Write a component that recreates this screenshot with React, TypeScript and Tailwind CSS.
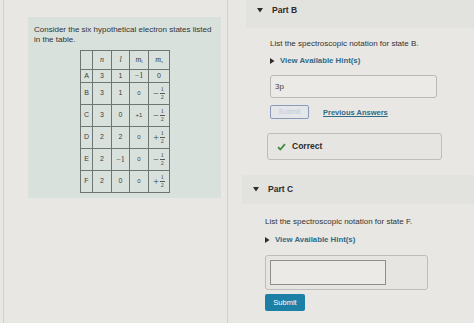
import React from "react";

type Cell = string | { sign: string; frac: boolean };

const rows: { label: string; n: string; l: string; ml: string; ms: Cell }[] = [
  { label: "A", n: "3", l: "1", ml: "−1", ms: "0" },
  { label: "B", n: "3", l: "1", ml: "0", ms: { sign: "−", frac: true } },
  { label: "C", n: "3", l: "0", ml: "+1", ms: { sign: "−", frac: true } },
  { label: "D", n: "2", l: "2", ml: "0", ms: { sign: "+", frac: true } },
  { label: "E", n: "2", l: "−1", ml: "0", ms: { sign: "−", frac: true } },
  { label: "F", n: "2", l: "0", ml: "0", ms: { sign: "+", frac: true } },
];

function Half({ sign }: { sign: string }) {
  return (
    <span className="inline-flex items-center gap-[1px]">
      <span className="text-[10px] leading-none font-['Liberation_Serif',serif]">{sign}</span>
      <span className="inline-flex flex-col items-center text-[6px] leading-[7px] font-['Liberation_Serif',serif]">
        <span className="border-b border-[#555] px-[1px]">1</span>
        <span>2</span>
      </span>
    </span>
  );
}

function StateTable() {
  const td = "border border-[#6f7572] text-center align-middle p-0";
  const head = " font-normal italic font-['Liberation_Serif',serif] text-[8px]";
  return (
    <table className="table-fixed border-collapse text-[7px] text-[#3a3d3c] ml-[46px] mt-[5px] w-[89px]">
      <thead>
        <tr className="h-[19px]">
          <th className={td + " w-[12px]"}></th>
          <th className={td + " w-[19px]" + head}>n</th>
          <th className={td + " w-[18px]" + head}>l</th>
          <th className={td + " w-[19px]" + head}>
            m<sub className="text-[5px] not-italic">l</sub>
          </th>
          <th className={td + " w-[21px]" + head}>
            m<sub className="text-[5px]">s</sub>
          </th>
        </tr>
      </thead>
      <tbody>
        {rows.map((r, i) => (
          <tr key={r.label} className={i === 0 ? "h-[13px]" : "h-[22px]"}>
            <td className={td}>{r.label}</td>
            <td className={td}>{r.n}</td>
            <td className={td + (r.l.startsWith("−") ? " font-['Liberation_Serif',serif] text-[8px]" : "")}>{r.l}</td>
            <td className={td + (r.ml === "−1" ? " font-['Liberation_Serif',serif] text-[8px]" : " text-[6px]")}>{r.ml}</td>
            <td className={td}>
              {typeof r.ms === "string" ? r.ms : <Half sign={r.ms.sign} />}
            </td>
          </tr>
        ))}
      </tbody>
    </table>
  );
}

function Caret({ open }: { open: boolean }) {
  return open ? (
    <svg width="6" height="5" viewBox="0 0 6 5" className="shrink-0">
      <path d="M0 0 L6 0 L3 4.5 Z" fill="#2d2d2d" />
    </svg>
  ) : (
    <svg width="5" height="6" viewBox="0 0 5 6" className="shrink-0">
      <path d="M0 0 L4.5 3 L0 6 Z" fill="#2d2d2d" />
    </svg>
  );
}

function Hint() {
  return (
    <div className="flex items-center gap-[5px] h-[12px]">
      <Caret open={false} />
      <span className="text-[7.8px] font-bold text-[#2f6a86]">View Available Hint(s)</span>
    </div>
  );
}

export default function App() {
  return (
    <div className="w-[474px] h-[323px] overflow-hidden bg-[#e8e7e3] flex font-['Liberation_Sans',Arial,sans-serif] text-[#2b2b2b]">
      {/* Left: problem statement */}
      <div className="ml-[3px] w-[225px] h-full border-l border-r border-[#cfcfcb] shrink-0">
        <div className="ml-[24px] mt-[17px] w-[193px] h-[181px] bg-[#d9e1dc] pt-[8px] pl-[6px]">
          <p className="text-[8px] leading-[10px] text-[#333]">
            Consider the six hypothetical electron states listed
            <br />
            in the table.
          </p>
          <StateTable />
        </div>
      </div>

      {/* Right: parts */}
      <div className="flex-1 pl-[18px]">
        <div className="h-[28px] bg-[#e2e2df] flex items-start pt-[6px] pl-[11px] gap-[9px]">
          <div className="mt-[2px]">
            <Caret open />
          </div>
          <span className="text-[8.5px] font-bold leading-[9px]">Part B</span>
        </div>

        <div className="pl-[24px]">
          <p className="mt-[11px] text-[8px] leading-[10px] text-[#333]">
            List the spectroscopic notation for state B.
          </p>
          <div className="mt-[6px]">
            <Hint />
          </div>
          <div className="mt-[8px] w-[167px] h-[23px] border border-[#b9b9b5] rounded-[3px] bg-[#ebeae6] flex items-center pl-[4px] text-[8px] text-[#444]">
            3p
          </div>
          <div className="mt-[7px] flex items-center gap-[14px]">
            <div className="w-[39px] h-[14px] border border-[#8a9bb8] rounded-[2px] bg-[#e4e6ea] flex items-center justify-center text-[7px] text-[#c4c9d0]">
              Submit
            </div>
            <span className="text-[7.5px] font-bold text-[#2f6a86] underline mt-[2px]">Previous Answers</span>
          </div>
          <div className="mt-[14px] -ml-[3px] w-[175px] h-[27px] border border-[#bdbdb9] rounded-[3px] bg-[#e6e5e1] flex items-center pl-[9px] gap-[6px]">
            <svg width="9" height="8" viewBox="0 0 9 8">
              <path d="M1 4.2 L3.3 6.5 L8 1.2" stroke="#3b8a3e" strokeWidth="1.8" fill="none" />
            </svg>
            <span className="text-[8.5px] font-bold">Correct</span>
          </div>
        </div>

        <div className="mt-[15px] -ml-[4px] h-[29px] bg-[#e2e2df] flex items-center pl-[11px] gap-[9px]">
          <Caret open />
          <span className="text-[8.5px] font-bold">Part C</span>
        </div>

        <div className="pl-[19px]">
          <p className="mt-[13px] text-[8px] leading-[10px] text-[#333]">
            List the spectroscopic notation for state F.
          </p>
          <div className="mt-[7px]">
            <Hint />
          </div>
          <div className="mt-[9px] w-[163px] h-[35px] border border-[#bdbdb9] rounded-[3px] bg-[#e6e5e1] flex items-center pl-[4px]">
            <div className="w-[116px] h-[25px] border border-[#8e8e8a] bg-[#ebeae6]" />
          </div>
          <div className="mt-[4px] w-[40px] h-[17px] rounded-[2px] bg-[#1b7fa6] flex items-center justify-center text-[7.5px] text-white">
            Submit
          </div>
        </div>
      </div>
    </div>
  );
}
